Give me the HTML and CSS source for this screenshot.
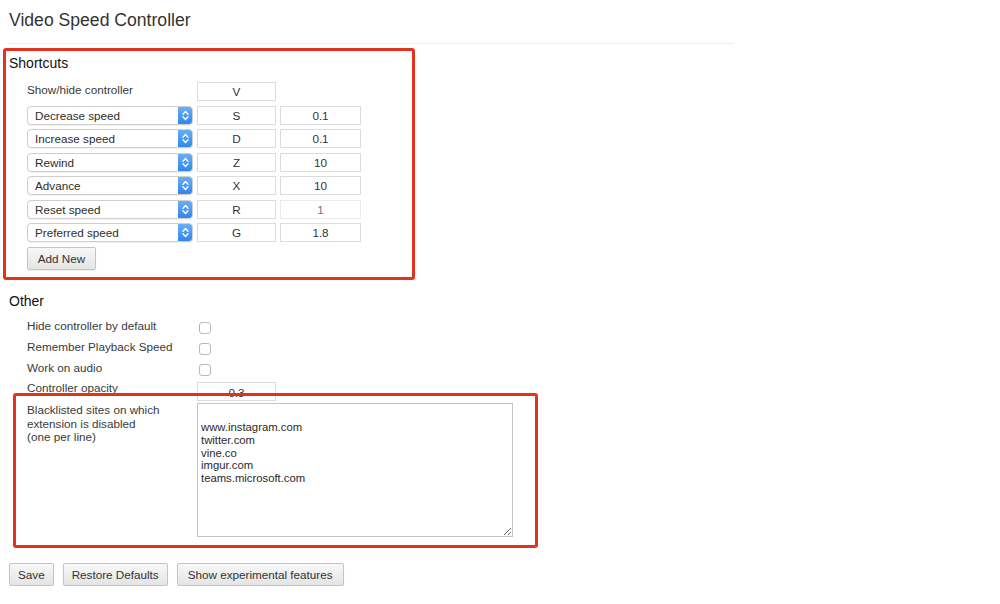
FILE: index.html
```html
<!DOCTYPE html>
<html>
<head>
<meta charset="utf-8">
<title>Video Speed Controller</title>
<link rel="stylesheet" href="styles.css">
</head>
<body>
<div class="page">
  <h1 class="title">Video Speed Controller</h1>
  <div class="rule"></div>

  <h2 class="section">Shortcuts</h2>
  <div class="shortcuts">
    <div class="row">
      <span class="row-label">Show/hide controller</span>
      <input class="field key" value="V">
    </div>
    <div class="row">
      <div class="select"><span class="select-text">Decrease speed</span><span class="arrow"><svg viewBox="0 0 15 19" width="15" height="19"><path d="M5 8.2 L7.5 5.6 L10 8.2 M5 10.8 L7.5 13.4 L10 10.8" fill="none" stroke="#fff" stroke-width="1.4" stroke-linecap="round" stroke-linejoin="round"/></svg></span></div>
      <input class="field key" value="S">
      <input class="field val" value="0.1">
    </div>
    <div class="row">
      <div class="select"><span class="select-text">Increase speed</span><span class="arrow"><svg viewBox="0 0 15 19" width="15" height="19"><path d="M5 8.2 L7.5 5.6 L10 8.2 M5 10.8 L7.5 13.4 L10 10.8" fill="none" stroke="#fff" stroke-width="1.4" stroke-linecap="round" stroke-linejoin="round"/></svg></span></div>
      <input class="field key" value="D">
      <input class="field val" value="0.1">
    </div>
    <div class="row">
      <div class="select"><span class="select-text">Rewind</span><span class="arrow"><svg viewBox="0 0 15 19" width="15" height="19"><path d="M5 8.2 L7.5 5.6 L10 8.2 M5 10.8 L7.5 13.4 L10 10.8" fill="none" stroke="#fff" stroke-width="1.4" stroke-linecap="round" stroke-linejoin="round"/></svg></span></div>
      <input class="field key" value="Z">
      <input class="field val" value="10">
    </div>
    <div class="row">
      <div class="select"><span class="select-text">Advance</span><span class="arrow"><svg viewBox="0 0 15 19" width="15" height="19"><path d="M5 8.2 L7.5 5.6 L10 8.2 M5 10.8 L7.5 13.4 L10 10.8" fill="none" stroke="#fff" stroke-width="1.4" stroke-linecap="round" stroke-linejoin="round"/></svg></span></div>
      <input class="field key" value="X">
      <input class="field val" value="10">
    </div>
    <div class="row">
      <div class="select"><span class="select-text">Reset speed</span><span class="arrow"><svg viewBox="0 0 15 19" width="15" height="19"><path d="M5 8.2 L7.5 5.6 L10 8.2 M5 10.8 L7.5 13.4 L10 10.8" fill="none" stroke="#fff" stroke-width="1.4" stroke-linecap="round" stroke-linejoin="round"/></svg></span></div>
      <input class="field key" value="R">
      <input class="field val disabled" value="1" disabled>
    </div>
    <div class="row">
      <div class="select"><span class="select-text">Preferred speed</span><span class="arrow"><svg viewBox="0 0 15 19" width="15" height="19"><path d="M5 8.2 L7.5 5.6 L10 8.2 M5 10.8 L7.5 13.4 L10 10.8" fill="none" stroke="#fff" stroke-width="1.4" stroke-linecap="round" stroke-linejoin="round"/></svg></span></div>
      <input class="field key" value="G">
      <input class="field val" value="1.8">
    </div>
    <button class="btn add-btn">Add New</button>
  </div>

  <h2 class="section other-title">Other</h2>
  <div class="other">
    <div class="orow">
      <span class="olabel">Hide controller by default</span>
      <span class="check"></span>
    </div>
    <div class="orow">
      <span class="olabel">Remember Playback Speed</span>
      <span class="check"></span>
    </div>
    <div class="orow">
      <span class="olabel">Work on audio</span>
      <span class="check"></span>
    </div>
    <div class="orow">
      <span class="olabel">Controller opacity</span>
      <input class="field key opacity" value="0.3">
    </div>
    <div class="brow">
      <span class="blabel">Blacklisted sites on which<br>extension is disabled<br>(one per line)</span>
      <textarea class="blacklist">

www.instagram.com
twitter.com
vine.co
imgur.com
teams.microsoft.com</textarea>
    </div>
  </div>

  <div class="actions">
    <button class="btn">Save</button>
    <button class="btn">Restore Defaults</button>
    <button class="btn wide">Show experimental features</button>
  </div>
</div>

<div class="mark mark-shortcuts"></div>
<div class="mark mark-blacklist"></div>
</body>
</html>
```
FILE: styles.css
```css
html, body {
  margin: 0;
  padding: 0;
  background: #fff;
}

body {
  font-family: "Liberation Sans", Helvetica, Arial, sans-serif;
  color: #3a3a3a;
  font-size: 11.7px;
}

.page {
  padding-left: 9px;
  width: 725px;
}

.title {
  margin: 0;
  padding-top: 9px;
  font-size: 17.6px;
  line-height: 22px;
  font-weight: normal;
  color: #333;
}

.rule {
  margin-top: 12px;
  margin-left: -1px;
  height: 1px;
  background: #ececec;
}

.section {
  margin: 11px 0 0;
  font-size: 14px;
  line-height: 17px;
  font-weight: normal;
  color: #111;
}

.shortcuts {
  margin-top: 10px;
  padding-left: 18px;
  display: flex;
  flex-direction: column;
  align-items: flex-start;
  gap: 4.5px;
}

.row {
  display: flex;
  align-items: center;
  gap: 4px;
  height: 19px;
}

.row-label {
  width: 166px;
  color: #3a3a3a;
  position: relative;
  top: -2px;
}

.field {
  box-sizing: border-box;
  height: 19px;
  border: 1px solid #dcdcdc;
  background: #fff;
  font-family: "Liberation Sans", Helvetica, Arial, sans-serif;
  font-size: 11.7px;
  color: #333;
  text-align: center;
  padding: 0;
  margin: 0;
  outline: none;
}

.key {
  width: 79px;
}

.val {
  width: 81px;
}

.val.disabled {
  color: #777;
  border-color: #ebebeb;
}

.select {
  box-sizing: border-box;
  width: 166px;
  height: 19px;
  display: flex;
  align-items: stretch;
  border: 1px solid #cfcfcf;
  border-radius: 4px;
  background: #fff;
  box-shadow: 0 1px 1px rgba(0,0,0,0.06);
  overflow: hidden;
}

.select-text {
  flex: 1;
  padding-left: 7px;
  line-height: 17px;
  color: #2e2e2e;
}

.arrow {
  width: 15px;
  display: flex;
  align-items: center;
  justify-content: center;
  background: linear-gradient(#6db1f7, #2b84ef);
  border-radius: 0 3px 3px 0;
  margin: -1px -1px -1px 0;
}

.btn {
  box-sizing: border-box;
  height: 23px;
  padding: 0 8px;
  border: 1px solid #c4c4c4;
  border-radius: 2px;
  background: linear-gradient(#f8f8f8, #e4e4e4);
  font-family: "Liberation Sans", Helvetica, Arial, sans-serif;
  font-size: 11.7px;
  color: #333;
  box-shadow: 0 1px 1px rgba(0,0,0,0.08);
}

.btn.wide {
  padding: 0 10px;
}

.add-btn {
  width: 69px;
  padding: 0;
  margin-top: 0.5px;
}

.other-title {
  margin-top: 22.5px;
}

.other {
  margin-top: 7px;
  padding-left: 18px;
  display: flex;
  flex-direction: column;
}

.orow {
  display: flex;
  align-items: center;
  height: 20.7px;
}

.olabel {
  width: 170px;
  position: relative;
  top: -1px;
}

.check {
  box-sizing: border-box;
  width: 12px;
  height: 12px;
  margin-left: 2px;
  margin-top: 3px;
  border: 1px solid #b9b9b9;
  border-radius: 3px;
  background: #fff;
}

.opacity {
  margin-top: 5px;
  padding-top: 2px;
}

.brow {
  display: flex;
  align-items: flex-start;
  margin-top: 4px;
}

.blabel {
  width: 170px;
  line-height: 13.5px;
}

.blacklist {
  box-sizing: border-box;
  width: 316px;
  height: 134px;
  margin: 0;
  padding: 4px 3px 3px;
  border: 1px solid #c4c4c4;
  font-family: "Liberation Sans", Helvetica, Arial, sans-serif;
  font-size: 11.3px;
  line-height: 12.75px;
  color: #2a2a2a;
  resize: both;
  outline: none;
}

.actions {
  margin-top: 26px;
  display: flex;
  gap: 9px;
}

.mark {
  position: absolute;
  border: 3px solid #e2341d;
  border-radius: 3px;
  box-sizing: border-box;
  pointer-events: none;
}

.mark-shortcuts {
  left: 3px;
  top: 48px;
  width: 412px;
  height: 232px;
}

.mark-blacklist {
  left: 13px;
  top: 393px;
  width: 525px;
  height: 155px;
}
```
